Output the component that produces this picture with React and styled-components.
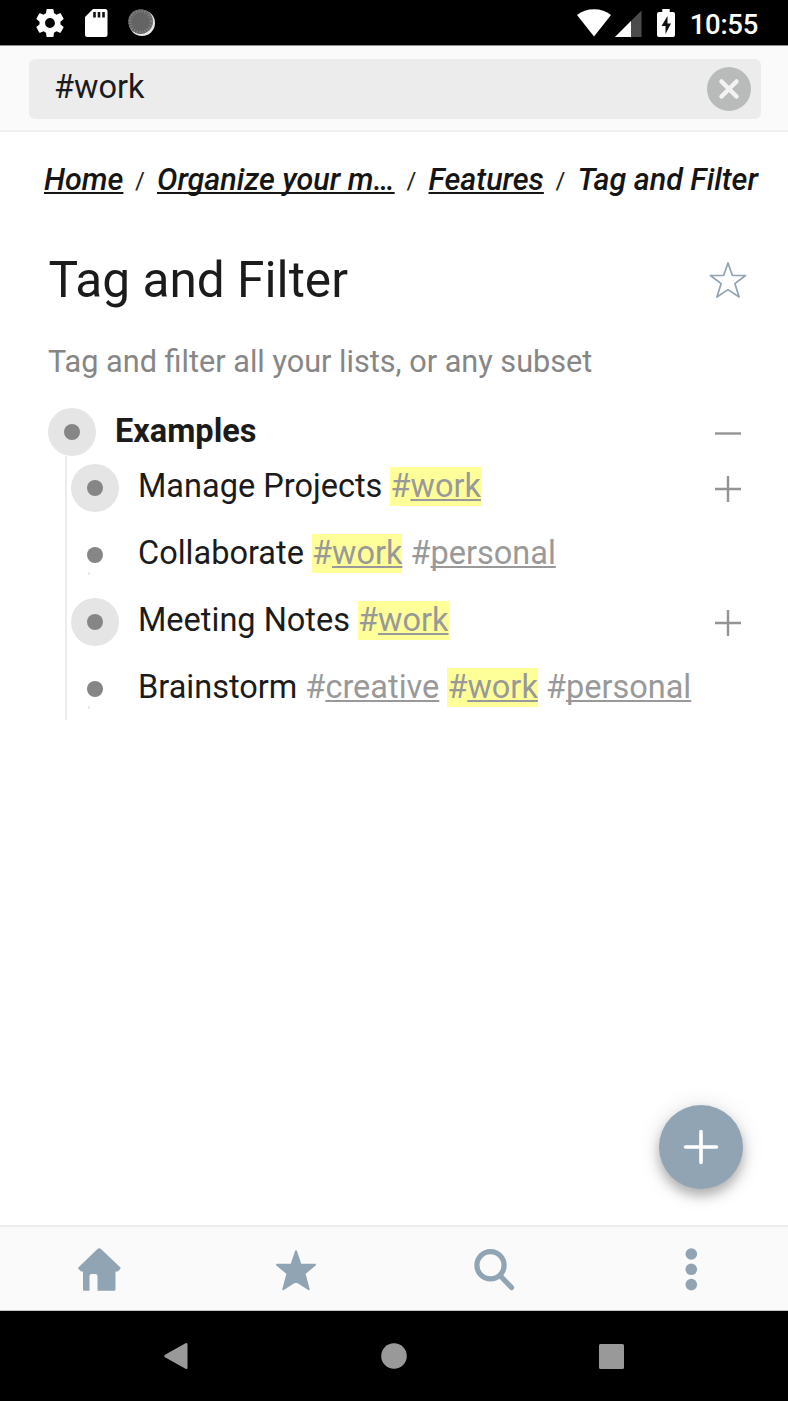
import React from 'react';
import styled, { createGlobalStyle } from 'styled-components';

const GlobalStyle = createGlobalStyle`
  * { box-sizing: border-box; }
  body { margin: 0; background: #fff; font-family: Roboto, "Liberation Sans", sans-serif; color: #1b1b1b; }
  svg { display: block; flex: none; }
  button { border: 0; padding: 0; background: none; font: inherit; color: inherit; }
`;

const Screen = styled.div`
  width: 788px;
  height: 1401px;
  display: flex;
  flex-direction: column;
  background: #fff;
  overflow: hidden;
`;

const StatusBar = styled.header`
  height: 46px;
  flex: none;
  display: flex;
  justify-content: space-between;
  padding: 9px 30px 0 36px;
  background: #000;
  border-bottom: 1px solid #8d8d8d;
`;

const StatusGroup = styled.div`
  display: flex;
  align-items: flex-start;
`;

const StatusIcon = styled.svg`
  margin-right: ${(p) => p.$gap}px;
`;

const Clock = styled.time`
  font-size: 27.5px;
  font-weight: 500;
  line-height: 32px;
  letter-spacing: -0.3px;
  color: #fff;
`;

const SearchHeader = styled.div`
  height: 86px;
  flex: none;
  padding: 13px 27px 0 29px;
  background: #fafafa;
  border-bottom: 2px solid #f0f0f0;
`;

const SearchField = styled.div`
  height: 60px;
  display: flex;
  align-items: center;
  justify-content: space-between;
  padding: 0 10px 0 25px;
  border-radius: 6px;
  background: #ececec;
`;

const Query = styled.span`
  font-size: 32.5px;
  line-height: 36px;
  margin-bottom: 4px;
`;

const Breadcrumbs = styled.nav`
  display: flex;
  height: 36px;
  margin: 29.5px 0 0 44px;
  font-size: 30.5px;
  font-weight: 500;
  font-style: italic;
  line-height: 36px;
  white-space: nowrap;
`;

const Crumb = styled.span`
  width: ${(p) => p.$width}px;
  color: #151515;
  text-decoration: ${(p) => (p.$link ? 'underline' : 'none')};
  text-decoration-thickness: 1.5px;
  text-underline-offset: 2px;
  text-decoration-skip-ink: none;
`;

const Slash = styled.span`
  width: 34px;
  text-align: center;
  font-weight: 400;
  font-style: normal;
  font-size: 24px;
  padding-top: 1px;
  color: #222;
`;

const Main = styled.main`
  flex: 1;
  display: flex;
  flex-direction: column;
  position: relative;
`;

const TitleRow = styled.div`
  display: flex;
  align-items: center;
  justify-content: space-between;
  height: 60px;
  margin: 52.5px 41px 0 48.5px;
`;

const Title = styled.h1`
  margin: 0;
  font-size: 49.6px;
  font-weight: 400;
  line-height: 60px;
  color: #1b1b1b;
`;

const Note = styled.p`
  margin: 34px 0 0 48px;
  height: 36px;
  font-size: 30.65px;
  line-height: 36px;
  color: #868686;
`;

const Outline = styled.section`
  margin: 28px 0 0 48px;
`;

const Row = styled.div`
  display: flex;
  align-items: flex-start;
  height: ${(p) => p.$height}px;
`;

const Bullet = styled.span`
  position: relative;
  flex: none;
  width: 48px;
  height: 48px;
  display: flex;
  align-items: center;
  justify-content: center;
  border-radius: 50%;
  background: ${(p) => (p.$collapsed ? '#e5e5e5' : 'transparent')};

  &::before {
    content: '';
    width: 16px;
    height: 16px;
    border-radius: 50%;
    background: #868686;
  }

  &::after {
    content: '';
    display: ${(p) => (p.$collapsed ? 'none' : 'block')};
    position: absolute;
    left: 17px;
    top: 41px;
    width: 2px;
    height: 3px;
    background: #ececec;
  }
`;

const ItemText = styled.span`
  flex: 1;
  margin-left: 19px;
  font-size: 32.5px;
  font-weight: ${(p) => (p.$bold ? 700 : 400)};
  line-height: 37px;
  margin-top: ${(p) => (p.$bold ? 5 : 4)}px;
  white-space: nowrap;
`;

const Tag = styled.span`
  color: #999;
  padding-bottom: 1px;
  background: ${(p) => (p.$match ? '#ffff99' : 'transparent')};

  u {
    text-decoration-thickness: 2px;
    text-underline-offset: 2px;
    text-decoration-skip-ink: none;
  }
`;

const Toggle = styled.button`
  margin: ${(p) => p.$top}px 47px 0 0;
`;

const Children = styled.div`
  margin-left: 17px;
  padding-left: 4px;
  padding-top: 8px;
  border-left: 2px solid #ececec;
  height: 264px;
`;

const AddButton = styled.button`
  position: absolute;
  right: 45px;
  bottom: 36px;
  width: 84px;
  height: 84px;
  border-radius: 50%;
  background: #90a4b4;
  display: grid;
  place-items: center;
  box-shadow: 0 7px 12px rgba(0, 0, 0, 0.26), 0 2px 24px rgba(0, 0, 0, 0.12);
`;

const TabBar = styled.nav`
  height: 86px;
  flex: none;
  display: grid;
  grid-template-columns: repeat(4, 197px);
  justify-items: center;
  align-items: start;
  padding: 21px 0 0 1px;
  background: #fafafa;
  border-top: 2px solid #ededed;
  border-bottom: 1px solid #c4c4c4;
`;

const SystemBar = styled.footer`
  height: 90px;
  flex: none;
  display: flex;
  justify-content: space-between;
  align-items: center;
  padding: 0 164px;
  background: #000;
`;

const BLUE = '#90a4b4';

const Hash = ({ name, match }) => (
  <Tag $match={match}>#<u>{name}</u></Tag>
);

const Plus = () => (
  <svg width="26" height="26" viewBox="0 0 26 26" stroke="#949494" strokeWidth="2.4">
    <path d="M0 13h26M13 0v26" />
  </svg>
);

const items = [
  { label: 'Manage Projects', tags: [['work', true]], collapsed: true },
  { label: 'Collaborate', tags: [['work', true], ['personal', false]] },
  { label: 'Meeting Notes', tags: [['work', true]], collapsed: true },
  { label: 'Brainstorm', tags: [['creative', false], ['work', true], ['personal', false]] },
];

export default function App() {
  return (
    <Screen>
      <GlobalStyle />
      <StatusBar>
        <StatusGroup>
          <StatusIcon $gap={21} width="28" height="28" viewBox="2.2 2 19.6 20" fill="#fff">
            <path d="M19.43 12.98c.04-.32.07-.64.07-.98s-.03-.66-.07-.98l2.11-1.65c.19-.15.24-.42.12-.64l-2-3.46c-.12-.22-.39-.3-.61-.22l-2.49 1c-.52-.4-1.08-.73-1.69-.98l-.38-2.65C14.46 2.18 14.25 2 14 2h-4c-.25 0-.46.18-.49.42l-.38 2.65c-.61.25-1.17.59-1.69.98l-2.49-1c-.23-.09-.49 0-.61.22l-2 3.46c-.13.22-.07.49.12.64l2.11 1.65c-.04.32-.07.65-.07.98s.03.66.07.98l-2.11 1.65c-.19.15-.24.42-.12.64l2 3.46c.12.22.39.3.61.22l2.49-1c.52.4 1.08.73 1.69.98l.38 2.65c.03.24.24.42.49.42h4c.25 0 .46-.18.49-.42l.38-2.65c.61-.25 1.17-.59 1.69-.98l2.49 1c.23.09.49 0 .61-.22l2-3.46c.12-.22.07-.49-.12-.64l-2.11-1.65zM12 15.5c-1.93 0-3.5-1.57-3.5-3.5s1.57-3.5 3.5-3.5 3.5 1.57 3.5 3.5-1.57 3.5-3.5 3.5z" />
          </StatusIcon>
          <StatusIcon $gap={20} width="23" height="28" viewBox="0 0 23 28">
            <path d="M8 0h12q2.5 0 2.5 2.5v23q0 2.5-2.5 2.5H2.5q-2.5 0-2.5-2.5V8z" fill="#fff" />
            <path d="M9.5 3v5.500M14 3v5.500M18.500 3v5.500" stroke="#111" strokeWidth="2.6" />
          </StatusIcon>
          <StatusIcon $gap={0} width="28" height="28" viewBox="0 0 28 28">
            <circle cx="14" cy="14" r="13" fill="#e8e8e8" />
            <circle cx="12.600" cy="12.600" r="12.400" fill="#646464" />
            <circle cx="12.600" cy="12.600" r="10.600" fill="none" stroke="#808080" strokeWidth="3" strokeDasharray="1.3 1.5" />
          </StatusIcon>
        </StatusGroup>
        <StatusGroup>
          <StatusIcon $gap={4} width="34" height="28" viewBox="0 0 34 28" fill="#fff">
            <path d="M17 27.500 0 6Q7 .200 17 .200T34 6z" />
          </StatusIcon>
          <StatusIcon $gap={15} width="27" height="28" viewBox="0 0 27 28">
            <path d="M0 28 26.500 1.500V28z" fill="#4c4c4c" />
            <path d="M0 28 16 12v16z" fill="#fff" />
          </StatusIcon>
          <StatusIcon $gap={14.5} width="18" height="28" viewBox="0 0 18 28">
            <path d="M5.300 0h7.400v3H16q2 0 2 2v21q0 2-2 2H2q-2 0-2-2V5q0-2 2-2h3.300z" fill="#fff" />
            <path d="M10.500 7 4.500 17h4v8L14 14.500H10.500z" fill="#111" />
          </StatusIcon>
          <Clock>10:55</Clock>
        </StatusGroup>
      </StatusBar>

      <SearchHeader>
        <SearchField>
          <Query>#work</Query>
          <svg width="44" height="44" viewBox="0 0 44 44">
            <circle cx="22" cy="22" r="22" fill="#b9bbba" />
            <path d="m14.500 14.500 15 15m0-15-15 15" stroke="#f3f3f3" strokeWidth="4.5" strokeLinecap="round" />
          </svg>
        </SearchField>
      </SearchHeader>

      <Main>
        <Breadcrumbs>
          <Crumb $link $width={79}>Home</Crumb>
          <Slash>/</Slash>
          <Crumb $link $width={237.5}>Organize your m…</Crumb>
          <Slash>/</Slash>
          <Crumb $link $width={115}>Features</Crumb>
          <Slash>/</Slash>
          <Crumb>Tag and Filter</Crumb>
        </Breadcrumbs>

        <TitleRow>
          <Title>Tag and Filter</Title>
          <svg width="38" height="38" viewBox="0 0 38 38" fill="none" stroke={BLUE} strokeWidth="1.7" strokeLinejoin="round">
            <path d="m19 2 4.300 12.300 13.200.200-10.600 8.200 4.200 13.300L19 28.600 7.900 36l4.200-13.300L1.500 14.500l13.200-.200z" />
          </svg>
        </TitleRow>

        <Note>Tag and filter all your lists, or any subset</Note>

        <Outline>
          <Row $height={48}>
            <Bullet $collapsed />
            <ItemText $bold>Examples</ItemText>
            <Toggle $top={12} aria-label="Collapse">
              <svg width="26" height="26" viewBox="0 0 26 26" stroke="#949494" strokeWidth="2.4">
                <path d="M0 13.500h26" />
              </svg>
            </Toggle>
          </Row>
          <Children>
            {items.map((item) => (
              <Row key={item.label} $height={67.1}>
                <Bullet $collapsed={item.collapsed} />
                <ItemText>
                  {item.label}
                  {item.tags.map(([name, match]) => (
                    <React.Fragment key={name}> <Hash name={name} match={match} /></React.Fragment>
                  ))}
                </ItemText>
                {item.collapsed && <Toggle $top={12} aria-label="Expand"><Plus /></Toggle>}
              </Row>
            ))}
          </Children>
        </Outline>

        <AddButton aria-label="Add">
          <svg width="36" height="36" viewBox="0 0 36 36" stroke="#fff" strokeWidth="3.6" strokeLinecap="round">
            <path d="M2.500 18h31M18 2.500v31" />
          </svg>
        </AddButton>
      </Main>

      <TabBar>
        <svg width="43" height="43" viewBox="0 0 43 43" fill={BLUE}>
          <path d="M19.700.700q1.600-1 3 0l19.500 18.500q.800.800 0 1.800L39.800 23.400H37.500V41.500q0 1.200-1.200 1.200H19.500V28q0-2-2-2h-4q-2 0-2 2v14.700H6.200Q5 42.700 5 41.500V23.400H3L.600 21q-1-1 0-1.800z" />
        </svg>
        <svg width="42" height="43" viewBox="1 0 42 43" fill={BLUE} stroke={BLUE} strokeWidth="2" strokeLinejoin="round">
          <path d="M21 3.200 25.500 16.500 40 16.800 29.500 25.500 33.700 41.200 21 33 8.300 41.200 12.500 25.500 2 16.800 16.500 16.500z" />
        </svg>
        <svg width="42" height="43" viewBox="0 0 42 43" fill="none" stroke={BLUE} strokeWidth="5.2">
          <circle cx="17.500" cy="17.300" r="13.600" />
          <path d="m27.500 28 11 11.500" strokeLinecap="round" />
        </svg>
        <svg width="14" height="43" viewBox="0 0 14 43" fill={BLUE}>
          <circle cx="7.300" cy="6" r="5.800" />
          <circle cx="7.300" cy="21.300" r="5.800" />
          <circle cx="7.300" cy="36.600" r="5.800" />
        </svg>
      </TabBar>

      <SystemBar>
        <svg width="24" height="28" viewBox="0 0 24 28" fill="#999">
          <path d="M21.500 1.300Q23.500.300 23.500 2.500v23q0 2.200-2 1.200L1 15.300q-1.600-1.300 0-2.600z" />
        </svg>
        <svg width="26" height="26" viewBox="0 0 26 26" fill="#999">
          <circle cx="13" cy="13" r="12.800" />
        </svg>
        <svg width="25" height="25" viewBox="0 0 25 25" fill="#999">
          <rect width="25" height="25" rx="1.500" />
        </svg>
      </SystemBar>
    </Screen>
  );
}
